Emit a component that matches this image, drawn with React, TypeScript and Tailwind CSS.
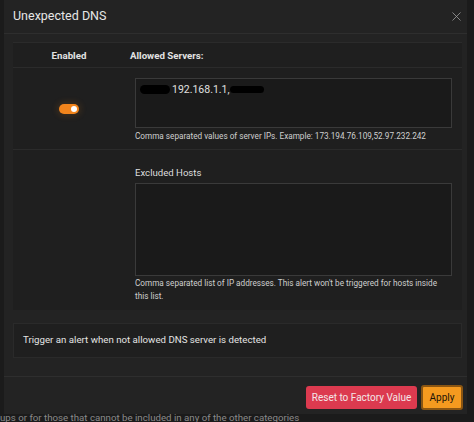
import { X } from "lucide-react";

const font = { fontFamily: 'Roboto, "Noto Sans", sans-serif' };

const Toggle = () => (
  <div className="w-[20px] h-[10px] rounded-full bg-[#f2841c] flex items-center justify-end pr-[2px] shadow-[0_0_6px_2px_rgba(242,132,28,0.15)]">
    <div className="w-[6px] h-[6px] rounded-full bg-white" />
  </div>
);

const App = () => {
  return (
    <div className="relative w-[474px] h-[422px] bg-[#1b1b1b] overflow-hidden text-[#dcdcdc]" style={font}>
      {/* page text behind the modal */}
      <div className="absolute left-0 top-[411px] text-[9.7px] leading-[14px] text-[#8a8a8a] whitespace-nowrap">
        ups or for those that cannot be included in any of the other categories
      </div>

      {/* modal */}
      <div className="absolute left-[4px] top-0 w-[463px] h-[414px] bg-[#232323] flex flex-col">
        {/* header */}
        <div className="h-[34px] flex items-center justify-between pl-[9px] pr-[3px] border-b border-[#2e2e2e]">
          <h2 className="text-[12.5px] text-[#e6e6e6]">Unexpected DNS</h2>
          <X size={15} strokeWidth={1.25} className="text-[#a0a0a0]" />
        </div>

        {/* body */}
        <div className="flex-1 pl-[9px] pr-[5px] pt-[8px]">
          <div className="bg-[#1f1f1f] border-t border-[#2b2b2b]">
            <div className="flex h-[25px] items-center pt-[3px] border-b border-[#2b2b2b] text-[9.7px] font-bold text-[#e2e2e2]">
              <div className="w-[112px] text-center">Enabled</div>
              <div className="pl-[5px]">Allowed Servers:</div>
            </div>

            <div className="flex border-b border-[#2b2b2b]">
              <div className="w-[112px] flex items-center justify-center">
                <Toggle />
              </div>
              <div className="flex-1 min-w-0 pl-[10px] pr-[10px] pt-[10px] pb-[7px]">
                <div className="h-[50px] bg-[#1a1a1a] border border-[#3a3a3a] pl-[4px] pt-[3px] text-[10.5px] text-[#e0e0e0] flex items-start">
                  <span className="inline-block w-[30px] h-[9px] mt-[3px] rounded-full bg-black" />
                  <span className="pl-[2px]">192.168.1.1,</span>
                  <span className="inline-block w-[34px] h-[7px] mt-[4px] rounded-full bg-black" />
                </div>
                <p className="mt-[2px] text-[8.2px] leading-[12px] text-[#cfcfcf] whitespace-nowrap">
                  Comma separated values of server IPs. Example: 173.194.76.109,52.97.232.242
                </p>
              </div>
            </div>

            <div className="flex">
              <div className="w-[112px]" />
              <div className="flex-1 min-w-0 pl-[10px] pr-[10px] pt-[16px] pb-[7px]">
                <div className="text-[9.6px] leading-[14px] text-[#dedede]">Excluded Hosts</div>
                <div className="mt-[3px] h-[93px] bg-[#1a1a1a] border border-[#3a3a3a]" />
                <p className="mt-[1px] text-[8.2px] leading-[13px] text-[#cfcfcf]">
                  Comma separated list of IP addresses. This alert won't be triggered for hosts inside this list.
                </p>
              </div>
            </div>
          </div>

          <div className="mt-[13px] h-[35px] flex items-center pl-[9px] bg-[#1f1f1f] border border-[#2a2a2a] text-[9.7px] text-[#e4e4e4]">
            Trigger an alert when not allowed DNS server is detected
          </div>
        </div>

        {/* footer */}
        <div className="h-[38px] pt-[3px] border-t border-[#2e2e2e] flex items-center justify-end gap-[4px] pr-[4px]">
          <button className="h-[23px] w-[111px] rounded-[3px] bg-[#dc3a4f] text-[10px] text-[#f3e6e8]">
            Reset to Factory Value
          </button>
          <button className="h-[25px] w-[42px] rounded-[3px] bg-[#f59a1f] border-2 border-[#8a5512] text-[10px] text-[#1c1408]">
            Apply
          </button>
        </div>
      </div>
    </div>
  );
};

export default App;
